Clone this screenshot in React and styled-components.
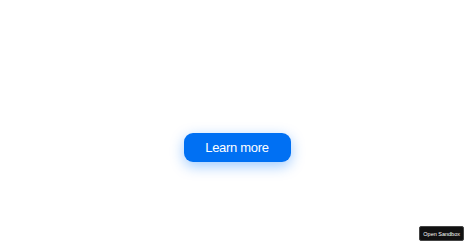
import React from "react";
import styled, { createGlobalStyle } from "styled-components";

const Global = createGlobalStyle`
  html, body {
    margin: 0;
    padding: 0;
    background: #ffffff;
    font-family: "Liberation Sans", Arial, sans-serif;
  }
`;

const Page = styled.div`
  position: relative;
  width: 474px;
  height: 248px;
  display: flex;
  align-items: center;
  justify-content: center;
`;

const Button = styled.button`
  margin-top: 47px;
  width: 107px;
  height: 29px;
  padding: 0;
  border: none;
  border-radius: 9px;
  background: #0070f3;
  color: #ffffff;
  font-family: "Liberation Sans", Arial, sans-serif;
  font-size: 13px;
  font-weight: 400;
  letter-spacing: -0.3px;
  box-shadow: 0 4px 14px 0 rgba(0, 118, 255, 0.39);
  cursor: pointer;
`;

const Sandbox = styled.a`
  position: absolute;
  right: 10px;
  bottom: 7px;
  padding: 0 3px;
  height: 13px;
  display: flex;
  align-items: center;
  background: #111111;
  border: 1px solid #444444;
  border-radius: 2px;
  color: #ffffff;
  font-family: "Liberation Sans", Arial, sans-serif;
  font-size: 5.5px;
  text-decoration: none;
`;

export default function App() {
  return (
    <>
      <Global />
      <Page>
        <Button>Learn more</Button>
        <Sandbox href="#">Open Sandbox</Sandbox>
      </Page>
    </>
  );
}
